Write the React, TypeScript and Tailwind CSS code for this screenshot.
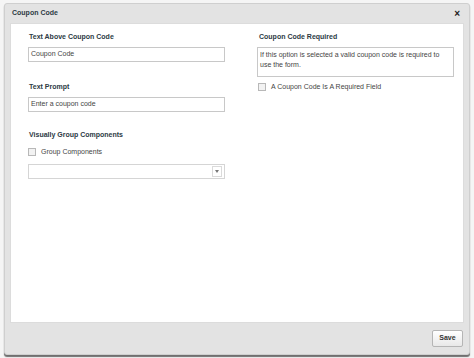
import React from "react";

export default function App() {
  return (
    <div className="w-[474px] h-[358px] bg-[#f5f5f5] pt-[3px] pl-[4px]" style={{ fontFamily: '"Liberation Sans", Arial, sans-serif' }}>
      <div className="w-[466px] h-[352px] bg-[#e3e3e3] border border-[#cfcfcf] rounded-[3px] shadow-[0_2px_1px_rgba(0,0,0,0.55)] flex flex-col">
        <div className="h-[19px] flex items-center justify-between pl-[7px] pr-[9px]">
          <span className="text-[7px] font-bold text-[#2c3a44]">Coupon Code</span>
          <span className="text-[10px] font-bold text-[#222] leading-none">×</span>
        </div>
        <div className="mx-[5px] h-[300px] bg-white border border-[#dcdcdc] grid grid-cols-2 gap-[32px] pl-[17px] pr-[9px] pt-[8px]">
          <div className="flex flex-col">
            <div className="text-[7px] font-bold text-[#2c3a44] pl-[1px] h-[10px] leading-[10px]">Text Above Coupon Code</div>
            <div className="mt-[5px] h-[15px] border border-[#c8c8c8] flex items-center pl-[2px] text-[7px] text-[#444]">Coupon Code</div>
            <div className="mt-[20px] text-[7px] font-bold text-[#2c3a44] pl-[1px] h-[10px] leading-[10px]">Text Prompt</div>
            <div className="mt-[5px] h-[15px] border border-[#c8c8c8] flex items-center pl-[2px] text-[7px] text-[#444]">Enter a coupon code</div>
            <div className="mt-[18px] text-[7px] font-bold text-[#2c3a44] pl-[1px] h-[10px] leading-[10px]">Visually Group Components</div>
            <div className="mt-[7px] flex items-center gap-[5px]">
              <div className="w-[8px] h-[8px] border border-[#b8b8b8] bg-[#f2f2f2]" />
              <span className="text-[7px] text-[#444] leading-[10px]">Group Components</span>
            </div>
            <div className="mt-[7px] h-[15px] border border-[#d5d5d5] flex items-center justify-end pr-[2px]">
              <div className="w-[10px] h-[11px] border border-[#dadada] flex items-center justify-center">
                <svg width="4" height="3" viewBox="0 0 4 3"><path d="M0 0H4L2 3Z" fill="#777" /></svg>
              </div>
            </div>
          </div>
          <div className="flex flex-col">
            <div className="text-[7px] font-bold text-[#2c3a44] pl-[2px] h-[10px] leading-[10px]">Coupon Code Required</div>
            <div className="mt-[5px] h-[30px] border border-[#c8c8c8] px-[2px] pt-[2px] text-[7px] leading-[10px] text-[#444]">If this option is selected a valid coupon code is required to use the form.</div>
            <div className="mt-[5px] flex items-center gap-[5px] pl-[1px]">
              <div className="w-[8px] h-[8px] border border-[#b8b8b8] bg-[#f2f2f2]" />
              <span className="text-[7px] text-[#444] leading-[10px]">A Coupon Code Is A Required Field</span>
            </div>
          </div>
        </div>
        <div className="flex-1 flex items-center justify-end pr-[6px]">
          <div className="w-[31px] h-[17px] rounded-[2px] border border-[#b5b5b5] bg-gradient-to-b from-white to-[#e8e8e8] flex items-center justify-center text-[7px] font-bold text-[#333]">Save</div>
        </div>
      </div>
    </div>
  );
}
